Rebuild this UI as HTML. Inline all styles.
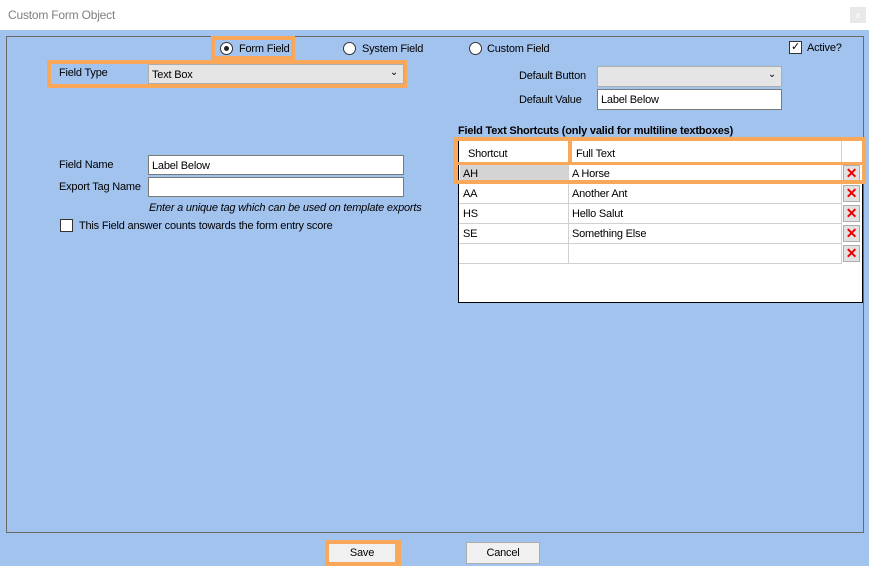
<!DOCTYPE html>
<html><head><meta charset="utf-8"><style>
*{box-sizing:border-box;margin:0;padding:0}
body{width:869px;height:566px;background:#a3c3ef;font-family:"Liberation Sans",sans-serif;font-size:11px;letter-spacing:-0.2px;color:#000;position:relative;overflow:hidden}
.a{position:absolute;white-space:nowrap}
.or{position:absolute;border:4px solid #f9a85a}
.in{position:absolute;background:#fff;border:1px solid #7a7a7a;padding:4px 3px 0;line-height:13px}
.cb{position:absolute;background:#e5e5e5;border:1px solid #adadad;padding:4px 3px 0;line-height:13px}
.rad{position:absolute;width:13px;height:13px;border:1px solid #333;border-radius:50%;background:#fff}
.x{position:absolute;width:17px;height:17px;background:#e1e1e1;border:1px solid #adadad;color:#e00;font-weight:bold;font-size:14px;line-height:15px;text-align:center}
.btn{position:absolute;background:#e1e1e1;border:1px solid #adadad;text-align:center;line-height:20px}
</style></head><body>
<div class="a" style="left:0;top:0;width:869px;height:30px;background:#fff"></div>
<div class="a" style="left:8px;top:8px;font-size:12px;color:#808080">Custom Form Object</div>
<div class="a" style="left:850px;top:7px;width:16px;height:16px;background:#e8e8e8;color:#fff;font-size:9px;text-align:center;line-height:16px">x</div>
<div class="a" style="left:6px;top:36px;width:858px;height:497px;border:1px solid #6a6a6a"></div>

<div class="or" style="left:211px;top:36px;width:84px;height:24px"></div>
<div class="rad" style="left:220px;top:42px"><div style="position:absolute;left:3px;top:3px;width:5px;height:5px;border-radius:50%;background:#222"></div></div>
<div class="a" style="left:239px;top:43px">Form Field</div>
<div class="rad" style="left:343px;top:42px"></div>
<div class="a" style="left:362px;top:43px">System Field</div>
<div class="rad" style="left:469px;top:42px"></div>
<div class="a" style="left:487px;top:43px">Custom Field</div>
<div class="a" style="left:789px;top:41px;width:13px;height:13px;border:1px solid #333;background:#fff;font-size:11px;line-height:11px;text-align:center">✓</div>
<div class="a" style="left:807px;top:42px">Active?</div>

<div class="or" style="left:47px;top:60px;width:360px;height:28px"></div>
<div class="a" style="left:59px;top:67px">Field Type</div>
<div class="cb" style="left:148px;top:64px;width:256px;height:20px">Text Box<span style="position:absolute;right:5px;top:1px;font-size:10px">&#8964;</span></div>

<div class="a" style="left:519px;top:70px">Default Button</div>
<div class="cb" style="left:597px;top:66px;width:185px;height:21px"><span style="position:absolute;right:5px;top:1px;font-size:10px">&#8964;</span></div>
<div class="a" style="left:519px;top:94px">Default Value</div>
<div class="in" style="left:597px;top:89px;width:185px;height:21px">Label Below</div>

<div class="a" style="left:458px;top:125px;font-weight:bold">Field Text Shortcuts (only valid for multiline textboxes)</div>
<div class="a" style="left:458px;top:140px;width:405px;height:163px;background:#fff;border:1px solid #000"></div>
<div class="a" style="left:468px;top:148px">Shortcut</div>
<div class="a" style="left:576px;top:148px">Full Text</div>
<div class="a" style="left:460px;top:164px;width:108px;height:20px;background:#d4d4d4"></div>
<div class="a" style="left:459px;top:203px;width:382px;border-top:1px solid #d0d0d0"></div>
<div class="a" style="left:459px;top:223px;width:382px;border-top:1px solid #d0d0d0"></div>
<div class="a" style="left:459px;top:243px;width:382px;border-top:1px solid #d0d0d0"></div>
<div class="a" style="left:459px;top:263px;width:382px;border-top:1px solid #d0d0d0"></div>
<div class="a" style="left:568px;top:164px;height:100px;border-left:1px solid #d0d0d0"></div>
<div class="a" style="left:841px;top:164px;height:100px;border-left:1px solid #d0d0d0"></div>
<div class="a" style="left:463px;top:168px">AH</div><div class="a" style="left:572px;top:168px">A Horse</div>
<div class="a" style="left:463px;top:188px">AA</div><div class="a" style="left:572px;top:188px">Another Ant</div>
<div class="a" style="left:463px;top:208px">HS</div><div class="a" style="left:572px;top:208px">Hello Salut</div>
<div class="a" style="left:463px;top:228px">SE</div><div class="a" style="left:572px;top:228px">Something Else</div>
<div class="x" style="left:843px;top:165px">✕</div>
<div class="x" style="left:843px;top:185px">✕</div>
<div class="x" style="left:843px;top:205px">✕</div>
<div class="x" style="left:843px;top:225px">✕</div>
<div class="x" style="left:843px;top:245px">✕</div>
<div class="or" style="left:453px;top:137px;width:413px;height:47px"></div>
<div class="a" style="left:568px;top:140px;height:24px;border-left:4px solid #f9a85a"></div>
<div class="a" style="left:841px;top:141px;height:22px;border-left:1px solid #d0d0d0"></div>
<div class="a" style="left:457px;top:162px;width:405px;border-top:3px solid #f9a85a"></div>

<div class="a" style="left:59px;top:159px">Field Name</div>
<div class="in" style="left:148px;top:155px;width:256px;height:20px">Label Below</div>
<div class="a" style="left:59px;top:181px">Export Tag Name</div>
<div class="in" style="left:148px;top:177px;width:256px;height:20px"></div>
<div class="a" style="left:149px;top:202px;font-style:italic;font-size:11px">Enter a unique tag which can be used on template exports</div>
<div class="a" style="left:60px;top:219px;width:13px;height:13px;border:1px solid #333;background:#fff"></div>
<div class="a" style="left:79px;top:220px">This Field answer counts towards the form entry score</div>

<div class="a" style="left:325px;top:540px;width:76px;height:26px;background:#f9a85a"></div>
<div class="btn" style="left:329px;top:544px;width:66px;height:18px;line-height:19px;background:#f0f0f0;border:none">Save</div>
<div class="btn" style="left:466px;top:542px;width:74px;height:22px;line-height:21px;background:#f0f0f0">Cancel</div>
</body></html>
